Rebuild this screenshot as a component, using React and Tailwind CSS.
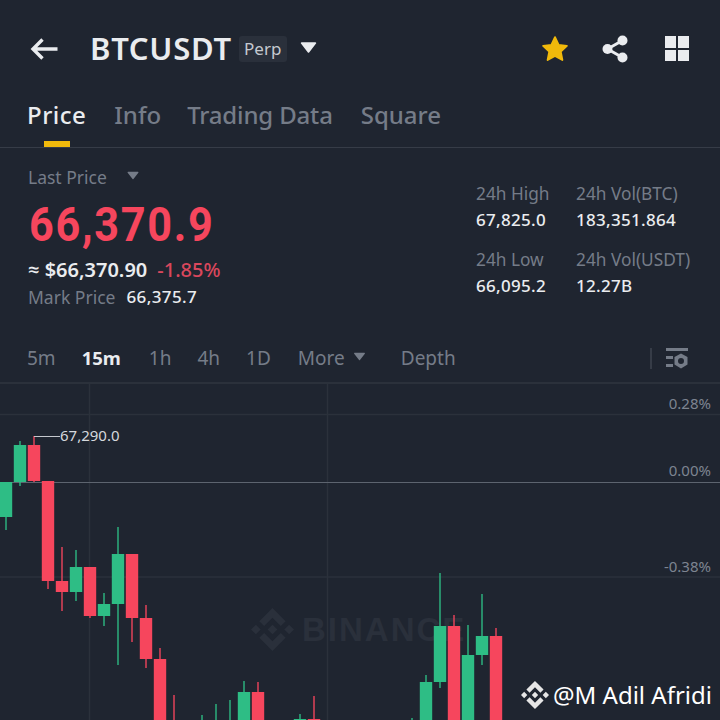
import React from 'react';

const UP = '#2ebd85';
const DOWN = '#f6465d';
const BINANCE_LOGO = 'M16.624 13.9202l2.7175 2.7154-7.353 7.353-7.353-7.352 2.7175-2.7164 4.6355 4.6595 4.6356-4.6595zm4.6366-4.6366L24 12l-2.7154 2.7164L18.5682 12l2.6924-2.7164zm-9.272.001l2.7163 2.6914-2.7164 2.7174v-.001L9.2721 12l2.7164-2.7154zm-9.2722-.001L5.4088 12l-2.6914 2.6924L0 12l2.7164-2.7164zM11.9885.0115l7.353 7.329-2.7174 2.7154-4.6356-4.6356-4.6355 4.6595-2.7174-2.7154 7.353-7.353z';

// [center x, wick top, body top, body bottom, wick bottom, up?]
const candles = [
  [6, 482, 482, 517, 530, true],
  [20, 441, 445, 482, 486, true],
  [34, 436, 445, 481, 482, false],
  [48, 481, 481, 581, 589, false],
  [62, 547, 581, 592, 611, false],
  [76, 550, 567, 592, 601, true],
  [90, 567, 567, 616, 618, false],
  [104, 593, 604, 616, 626, true],
  [118, 527, 554, 604, 665, true],
  [132, 554, 554, 618, 642, false],
  [146, 605, 618, 659, 668, false],
  [160, 648, 659, 730, 730, false],
  [174, 695, 730, 730, 730, false],
  [202, 715, 730, 730, 730, true],
  [216, 704, 730, 730, 730, true],
  [230, 700, 730, 730, 730, true],
  [244, 681, 692, 730, 730, true],
  [258, 682, 692, 730, 730, false],
  [300, 714, 719, 730, 730, true],
  [314, 696, 719, 730, 730, false],
  [412, 718, 730, 730, 730, true],
  [426, 675, 682, 730, 730, true],
  [440, 573, 626, 682, 688, true],
  [454, 615, 626, 730, 730, false],
  [468, 625, 655, 730, 730, true],
  [482, 594, 636, 655, 665, true],
  [496, 628, 636, 730, 730, false],
];

function Caret({ className }) {
  return (
    <svg viewBox="0 0 16 12" className={className} fill="currentColor">
      <path d="M1.5 1h13a.8.8 0 0 1 .6 1.3L8.6 10.6a.8.8 0 0 1-1.2 0L.9 2.3A.8.8 0 0 1 1.500 1z" />
    </svg>
  );
}

function Stat({ label, value }) {
  return (
    <div className="flex flex-col">
      <span className="text-[17.300px] leading-[26px] text-[#757c88]">{label}</span>
      <span className="text-[17px] leading-[26px] font-medium tracking-[0.3px] text-[#eaecef]">{value}</span>
    </div>
  );
}

function Chart() {
  return (
    <svg viewBox="0 384 720 336" className="relative block w-full h-full">
      <g stroke="#2b313b" strokeWidth="1.5">
        <line x1="0" x2="720" y1="414.500" y2="414.500" />
        <line x1="0" x2="720" y1="577" y2="577" />
        <line x1="89.500" x2="89.500" y1="384" y2="720" />
        <line x1="327.500" x2="327.500" y1="384" y2="720" />
      </g>
      <line x1="0" x2="720" y1="482.500" y2="482.500" stroke="#5d646f" strokeWidth="1.2" />
      {candles.map(([x, wt, bt, bb, wb, up]) => (
        <g key={x} fill={up ? UP : DOWN}>
          <rect x={x - 0.9} y={wt} width="1.800" height={wb - wt} opacity="0.75" />
          {bb > bt && <rect x={x - 6.2} y={bt} width="12.400" height={bb - bt} />}
        </g>
      ))}
      <path d="M34 436.500H60" fill="none" stroke="#c5c8ce" strokeWidth="1" />
    </svg>
  );
}

export default function App() {
  const font = { fontFamily: '"Noto Sans", "Open Sans", sans-serif' };
  return (
    <div className="w-[720px] h-[720px] overflow-hidden bg-[#1f2530] flex flex-col" style={font}>
      {/* Header */}
      <div className="h-[97px] shrink-0 flex items-center pl-[30px] pr-[31px]">
        <svg viewBox="0 0 28 24" className="w-[28px] h-[24px] text-[#eaecef]" fill="none" stroke="currentColor" strokeWidth="3.4">
          <path d="M27.500 12H3M12.500 2.500L3 12l9.500 9.500" />
        </svg>
        <span className="ml-[32px] text-[31px] leading-none font-semibold text-[#eaecef] tracking-[0.7px]">BTCUSDT</span>
        <span className="ml-[7px] h-[26px] w-[48px] rounded-[3px] bg-[#2a303b] flex items-center justify-center text-[17px] text-[#c5c9d0]">Perp</span>
        <Caret className="ml-[13px] mb-[2px] w-[17px] h-[13px] text-[#eaecef]" />
        <div className="ml-auto flex items-center">
          <svg viewBox="0 0 24 24" className="w-[30px] h-[30px] text-[#f0b90b]" fill="currentColor" stroke="currentColor" strokeWidth="1.500" strokeLinejoin="round">
            <path d="M12 2.500l2.900 6.200 6.600.8-4.900 4.600 1.300 6.700-5.900-3.300-5.900 3.300 1.300-6.700-4.900-4.600 6.600-.8z" />
          </svg>
          <svg viewBox="0 0 26 28" className="ml-[32px] w-[26px] h-[28px] text-[#eaecef]" fill="currentColor">
            <circle cx="20.500" cy="5.500" r="5" />
            <circle cx="5.500" cy="14" r="5" />
            <circle cx="20.500" cy="22.500" r="5" />
            <path d="M5.500 14L20.500 5.500M5.500 14l15 8.500" stroke="currentColor" strokeWidth="3" />
          </svg>
          <div className="ml-[37px] w-[24px] h-[25px] grid grid-cols-2 gap-[2px]">
            <div className="bg-[#eaecef]" />
            <div className="bg-[#eaecef]" />
            <div className="bg-[#eaecef]" />
            <div className="bg-[#eaecef]" />
          </div>
        </div>
      </div>

      {/* Tabs */}
      <div className="h-[51px] shrink-0 border-b border-[#363c47] flex items-start pl-[27px] text-[24px] leading-[36px] font-medium text-[#757c88]">
        <div className="h-[50px] flex flex-col items-center text-[#eaecef] tracking-[0.5px]">
          <span>Price</span>
          <span className="mt-auto w-[26px] h-[6px] bg-[#f0b90b]" />
        </div>
        <span className="ml-[28px]">Info</span>
        <span className="ml-[26px] tracking-[-0.15px]">Trading Data</span>
        <span className="ml-[28px]">Square</span>
      </div>

      {/* Price summary */}
      <div className="h-[186px] shrink-0 flex justify-between pl-[28px]">
        <div className="flex flex-col pt-[16px]">
          <div className="flex items-center text-[17.500px] leading-[26px] text-[#757c88]">
            <span>Last Price</span>
            <Caret className="ml-[20px] mb-[3px] w-[12px] h-[9px]" />
          </div>
          <span className="mt-[7px] ml-[1px] origin-left scale-x-90 text-[48px] leading-[56px] font-bold tracking-[1.900px] text-[#f6465d]" style={{ fontFamily: 'Roboto, sans-serif' }}>66,370.9</span>
          <div className="mt-[4px] flex items-center text-[20px] leading-[26px]">
            <span className="font-semibold text-[#eaecef]">≈ $66,370.90</span>
            <span className="ml-[10px] font-medium text-[#d9475c]">-1.85%</span>
          </div>
          <div className="mt-[1px] flex items-center text-[17.500px] leading-[26px]">
            <span className="text-[#757c88]">Mark Price</span>
            <span className="ml-[11px] text-[17px] font-medium tracking-[0.4px] text-[#eaecef]">66,375.7</span>
          </div>
        </div>
        <div className="w-[244px] shrink-0 grid grid-cols-[100px_144px] content-start gap-y-[14px] pt-[33px]">
          <Stat label="24h High" value="67,825.0" />
          <Stat label="24h Vol(BTC)" value="183,351.864" />
          <Stat label="24h Low" value="66,095.2" />
          <Stat label="24h Vol(USDT)" value="12.27B" />
        </div>
      </div>

      {/* Timeframes */}
      <div className="h-[50px] shrink-0 border-b-2 border-[#2b313b] flex items-center pl-[27px] pr-[32px] text-[19px] text-[#757c88]">
        <span>5m</span>
        <span className="ml-[26px] text-[18.500px] font-bold text-[#eaecef]">15m</span>
        <span className="ml-[28px]">1h</span>
        <span className="ml-[26px]">4h</span>
        <span className="ml-[26px]">1D</span>
        <span className="ml-[27px]">More</span>
        <Caret className="ml-[8px] mb-[4px] w-[13px] h-[9px]" />
        <span className="ml-[35px]">Depth</span>
        <div className="ml-auto w-[2px] h-[21px] bg-[#363c47]" />
        <svg viewBox="0 0 22 21" className="ml-[14px] w-[22px] h-[21px]" fill="currentColor">
          <rect x="0" y="0" width="22" height="3" />
          <rect x="0" y="8" width="7" height="3" />
          <rect x="0" y="16" width="7" height="3" />
          <path fillRule="evenodd" d="M15 5.500l6.500 3.500v7.500L15 20.500l-6.500-4V9zM15 10a3 3 0 1 0 0 6 3 3 0 0 0 0-6z" />
        </svg>
      </div>

      {/* Chart */}
      <div className="relative flex-1 min-h-0">
        <div className="absolute left-[251px] top-[224px] flex items-center gap-[8px] text-[#2a303b]">
          <svg viewBox="0 0 24 24" className="w-[43px] h-[43px]" fill="currentColor"><path d={BINANCE_LOGO} /></svg>
          <span className="text-[33px] leading-none font-bold tracking-[2px]" style={{ fontFamily: '"Liberation Sans", sans-serif' }}>BINANCE</span>
        </div>
        <Chart />
        <span className="absolute left-[60px] top-[40px] text-[15px] leading-[22px] text-[#d5d8dd]">67,290.0</span>
        <span className="absolute right-[9px] top-[9px] text-[15px] leading-[20px] text-[#7d8490]">0.28%</span>
        <span className="absolute right-[9px] top-[76px] text-[15px] leading-[20px] text-[#7d8490]">0.00%</span>
        <span className="absolute right-[9px] top-[172px] text-[15px] leading-[20px] text-[#7d8490]">-0.38%</span>
        <div className="absolute left-[521px] top-[296px] flex items-center gap-[4px] text-white">
          <svg viewBox="0 0 24 24" className="w-[28px] h-[28px] text-[#e6e6e6]" fill="currentColor"><path d={BINANCE_LOGO} /></svg>
          <span className="text-[24px] leading-[30px] whitespace-nowrap">@M Adil Afridi</span>
        </div>
      </div>
    </div>
  );
}
